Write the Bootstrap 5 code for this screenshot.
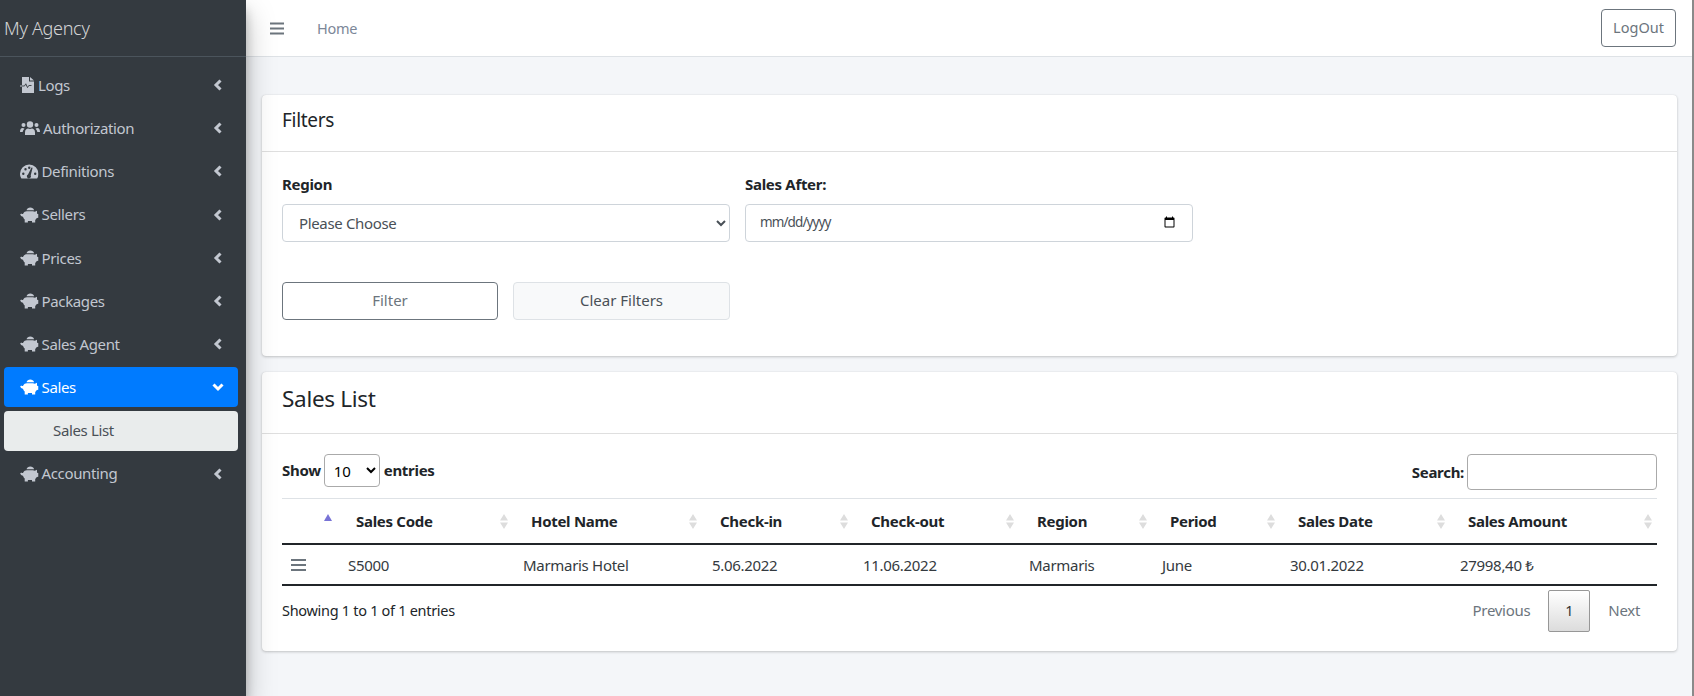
<!DOCTYPE html>
<html lang="en"><head><meta charset="utf-8">
<title>My Agency</title>
<link href="https://cdn.jsdelivr.net/npm/bootstrap@5.3.0/dist/css/bootstrap.min.css" rel="stylesheet">
<style>
html,body{height:100%;overflow:hidden}
body{font-family:"Noto Sans","Liberation Sans",sans-serif;font-size:14.5px;background:#f4f6f9;color:#212529;letter-spacing:-.3px}
.shell{height:696px}
.side{width:246px;flex:none;position:relative;z-index:5;background:#343a40;color:#c2c7d0;box-shadow:0 14px 28px rgba(0,0,0,.25),0 10px 10px rgba(0,0,0,.22)}
.brandline{height:57px;padding:0 4px;font-size:18px;font-weight:300;color:rgba(255,255,255,.8);border-bottom:1px solid #4b545c}
.menu{padding-top:8px}
.mitem{height:40px;margin:0 8px 3.2px 4px;padding:0 14px 0 16px;color:#c2c7d0;border-radius:4px;text-decoration:none;font-size:15px;letter-spacing:-.35px}
.mitem svg.ic{width:18.5px;height:16px;flex:none;fill:currentColor;margin-right:3px}
.mitem svg.ic.nar{width:14px;margin-right:4px}
.mitem svg.ic.wid{width:20px}
.mitem svg.ch{width:12px;height:12px;margin-left:auto;fill:none;stroke:currentColor;stroke-width:3}
.mitem.on{background:#007bff;color:#fff}
.mitem.sub{background:#e9ecec;color:#495057;padding-left:49px}
.pane{border-right:2px solid #8a8a8a;min-width:0}
.topbar{height:57px;background:#fff;border-bottom:1px solid #dee2e6;padding:0 16px 0 24px}
.topbar a{color:#7c8798;text-decoration:none;margin-left:33px;padding-top:2px}
.btn-out{width:75px;height:38px;border:1px solid #6c757d;border-radius:4px;background:#fff;color:#6c757d;font-size:14.5px;padding:0}
.bars{width:14px;height:15px;color:#6c757d}
.wrap{padding:38px 15px 0 16px}
.panel{background:#fff;border-radius:4px;box-shadow:0 0 1px rgba(0,0,0,.125),0 1px 3px rgba(0,0,0,.2)}
.panel-head{border-bottom:1px solid rgba(0,0,0,.125);padding:0 20px}
.p1{height:261px;margin-bottom:16px}
.p1 .panel-head{height:57px;font-size:19px;font-weight:400;padding-bottom:5px}
.p2{height:279px}
.p2 .panel-head{height:62px;font-size:22.5px;padding-bottom:8px}
.fbody{padding:21px 20px 20px}
.flab{font-weight:700;margin-bottom:8px;font-size:15px;display:block}
.fld{width:448px}
.twin{gap:15px}
.fctl{height:38px;width:100%;background-color:#fff;border:1px solid #ced4da;border-radius:4px;font-size:15px;color:#495057;padding:0 12px;letter-spacing:-.35px;font-family:inherit}
input.fctl{font-size:13.5px;letter-spacing:-.9px;padding:0 14px}
.act{margin-top:40px}
.act button{width:216px;height:38px;border-radius:4px;font-size:15px;padding:0}
.act button.bc{width:217px}
.bf{background:#fff;border:1px solid #6c757d;color:#6c757d}
.bc{background:#f8f9fa;border:1px solid #dee2e6;color:#495057}
.ctl{padding:20px 20px 0 20px;height:64px}
.ctl label{font-weight:700;font-size:15px}
.tselect{width:56px;height:33px;border:1px solid #aaa;border-radius:4px;background:#fff;margin:0 4px 0 3px;font-size:15px;padding:0 5px;font-family:inherit}
.tsearch{width:190px;height:36px;border:1px solid #aaa;border-radius:4px;margin-left:3px}
.tb{margin:0 20px;width:1375px;border-collapse:collapse;table-layout:fixed}
.tb col:nth-child(1){width:64px}
.tb col:nth-child(2){width:175px}
.tb col:nth-child(3){width:189px}
.tb col:nth-child(4){width:151px}
.tb col:nth-child(5){width:166px}
.tb col:nth-child(6){width:133px}
.tb col:nth-child(7){width:128px}
.tb col:nth-child(8){width:170px}
.tb thead tr{border-top:1px solid #dee2e6;border-bottom:2px solid #212529;height:45px}
.tb th{font-weight:700;position:relative;font-size:15px;padding-left:10px}
.tb td{font-size:15px;padding:3px 0 0 2px;height:41px;color:#343a40}
.tb td:first-child{padding:0 0 0 9px}
.tb tbody tr{border-bottom:2px solid #212529}
.sorter{position:absolute;right:13px;top:15px;width:8px;height:15px;color:#ddd}
.tb th:last-child .sorter{right:5px}
.sorter.asc{left:42px;right:auto;top:15px;height:7px;color:#7873d6}
.foot{padding:0 20px;margin-top:4px}
.pgbtn{color:#6c757d;font-size:15px;padding:0 17px}
.pgcur{width:42px;height:42px;border:1px solid #979797;border-radius:2px;background:linear-gradient(#fff,#dcdcdc);color:#333;display:flex;align-items:center;justify-content:center;margin:0 1px}
</style></head><body>
<svg width="0" height="0" class="d-block"><defs>
<symbol id="pig" viewBox="0 0 18.500 16" preserveAspectRatio="none">
<path d="M6.500 3.200C7 1.500 8.500.6 10.300.6s3.300.9 3.800 2.600z"/>
<path d="M3.300 6.500C4 5 5.300 4.200 6.800 4.200h6c.8 0 1.500.2 2.100.6L17 3.700v3l1.500.4v3.600l-1.700.4c-.4.800-1 1.400-1.600 1.900V15.500h-3.200V14H7.900v1.500H4.700v-3.100c-.9-.7-1.500-1.600-1.700-2.700C1.600 9.400.6 8.500.2 7.200l1.200-.8c.4.600 1 1 1.900.1z"/></symbol>
<symbol id="log" viewBox="0 0 14 16" preserveAspectRatio="none">
<path d="M2 0h7v4.500h5V16H2V9.500H0v-1h2zM10 0l4 3.500h-4z"/>
<path d="M2 9h2.500l1.300-2.200 1.700 3.800 1.300-2.100h2.700" fill="none" stroke="#343a40" stroke-width=".9"/></symbol>
<symbol id="usr" viewBox="0 0 20 16" preserveAspectRatio="none"><circle cx="10" cy="4.500" r="3.200"/><circle cx="3.500" cy="5" r="2"/><circle cx="16.500" cy="5" r="2"/><path d="M5 15v-2.500c0-3 1.800-4 3-4 1.300.5 2.700.5 4 0 1.200 0 3 1 3 4V15zM0 12c0-2.600 1-4 2.500-4 .7 0 1.500.2 2 .7-1 .8-1.600 2-1.800 3.300zM20 12c0-2.600-1-4-2.500-4-.7 0-1.500.2-2 .7 1 .8 1.600 2 1.800 3.300z"/></symbol>
<symbol id="gau" viewBox="0 0 18.500 16" preserveAspectRatio="none"><path fill-rule="evenodd" d="M9.250 1.500a9.250 9.250 0 0 1 9.250 9.250c0 1.800-.5 3.300-1.400 4.750H1.400C.5 14 0 12.500 0 10.750A9.250 9.250 0 0 1 9.250 1.500zM11.500 4.500L8 11.500a2 2 0 1 0 2.700.9l1.900-7.600zM3.300 9.500a1.200 1.200 0 1 0 0 2.400 1.200 1.200 0 0 0 0-2.400zM5.500 5a1.200 1.200 0 1 0 0 2.400 1.200 1.200 0 0 0 0-2.400zM9.250 3.500a1.200 1.200 0 1 0 0 2.400 1.200 1.200 0 0 0 0-2.400zM15.200 9.500a1.200 1.200 0 1 0 0 2.400 1.200 1.200 0 0 0 0-2.400z"/></symbol>
<symbol id="lft" viewBox="0 0 12 12"><path d="M8.500 1.500L4 6l4.500 4.500"/></symbol>
<symbol id="dwn" viewBox="0 0 12 12"><path d="M1.500 3.500L6 8l4.500-4.500"/></symbol>
<symbol id="sort" viewBox="0 0 8 15" preserveAspectRatio="none"><path d="M4 0l4 6.500H0zM4 15L0 8.500h8z"/></symbol>
</defs></svg>
<div class="shell d-flex">
<aside class="side">
<div class="brandline d-flex align-items-center">My Agency</div>
<nav class="menu d-flex flex-column">
<a class="mitem d-flex align-items-center" href="#"><svg class="ic nar"><use href="#log"/></svg>Logs<svg class="ch"><use href="#lft"/></svg></a>
<a class="mitem d-flex align-items-center" href="#"><svg class="ic wid"><use href="#usr"/></svg>Authorization<svg class="ch"><use href="#lft"/></svg></a>
<a class="mitem d-flex align-items-center" href="#"><svg class="ic"><use href="#gau"/></svg>Definitions<svg class="ch"><use href="#lft"/></svg></a>
<a class="mitem d-flex align-items-center" href="#"><svg class="ic"><use href="#pig"/></svg>Sellers<svg class="ch"><use href="#lft"/></svg></a>
<a class="mitem d-flex align-items-center" href="#"><svg class="ic"><use href="#pig"/></svg>Prices<svg class="ch"><use href="#lft"/></svg></a>
<a class="mitem d-flex align-items-center" href="#"><svg class="ic"><use href="#pig"/></svg>Packages<svg class="ch"><use href="#lft"/></svg></a>
<a class="mitem d-flex align-items-center" href="#"><svg class="ic"><use href="#pig"/></svg>Sales Agent<svg class="ch"><use href="#lft"/></svg></a>
<a class="mitem on d-flex align-items-center" href="#"><svg class="ic"><use href="#pig"/></svg>Sales<svg class="ch"><use href="#dwn"/></svg></a>
<a class="mitem sub d-flex align-items-center" href="#">Sales List</a>
<a class="mitem d-flex align-items-center" href="#"><svg class="ic"><use href="#pig"/></svg>Accounting<svg class="ch"><use href="#lft"/></svg></a>
</nav>
</aside>
<main class="pane flex-grow-1">
<header class="topbar d-flex align-items-center">
<svg class="bars" viewBox="0 0 15 15" preserveAspectRatio="none" fill="currentColor"><rect y="1.500" width="15" height="2"/><rect y="6.500" width="15" height="2"/><rect y="11.500" width="15" height="2"/></svg>
<a href="#">Home</a>
<button class="btn-out ms-auto">LogOut</button>
</header>
<div class="wrap">
<section class="panel p1">
<div class="panel-head d-flex align-items-center">Filters</div>
<div class="fbody">
<div class="twin d-flex">
<div class="fld"><label class="flab">Region</label><select class="fctl"><option>Please Choose</option></select></div>
<div class="fld"><label class="flab">Sales After:</label><input class="fctl" type="date"></div>
</div>
<div class="act twin d-flex"><button class="bf">Filter</button><button class="bc">Clear Filters</button></div>
</div>
</section>
<section class="panel p2">
<div class="panel-head d-flex align-items-center">Sales List</div>
<div class="ctl d-flex justify-content-between align-items-start">
<label class="d-flex align-items-center">Show<select class="tselect"><option>10</option></select>entries</label>
<label class="d-flex align-items-center">Search:<input class="tsearch"></label>
</div>
<table class="tb">
<colgroup><col><col><col><col><col><col><col><col><col></colgroup>
<thead><tr>
<th><svg class="sorter asc" fill="currentColor" viewBox="0 0 8 7"><path d="M4 0l4 7H0z"/></svg></th>
<th>Sales Code<svg class="sorter" fill="currentColor"><use href="#sort"/></svg></th>
<th>Hotel Name<svg class="sorter" fill="currentColor"><use href="#sort"/></svg></th>
<th>Check-in<svg class="sorter" fill="currentColor"><use href="#sort"/></svg></th>
<th>Check-out<svg class="sorter" fill="currentColor"><use href="#sort"/></svg></th>
<th>Region<svg class="sorter" fill="currentColor"><use href="#sort"/></svg></th>
<th>Period<svg class="sorter" fill="currentColor"><use href="#sort"/></svg></th>
<th>Sales Date<svg class="sorter" fill="currentColor"><use href="#sort"/></svg></th>
<th>Sales Amount<svg class="sorter" fill="currentColor"><use href="#sort"/></svg></th>
</tr></thead>
<tbody><tr>
<td class="text-secondary"><svg width="15" height="13" viewBox="0 0 15 13" fill="currentColor"><rect width="15" height="2"/><rect y="5" width="15" height="2"/><rect y="10" width="15" height="2"/></svg></td>
<td>S5000</td><td>Marmaris Hotel</td><td>5.06.2022</td><td>11.06.2022</td><td>Marmaris</td><td>June</td><td>30.01.2022</td><td>27998,40 ₺</td>
</tr></tbody></table>
<div class="foot d-flex justify-content-between align-items-center">
<span>Showing 1 to 1 of 1 entries</span>
<div class="d-flex align-items-center"><span class="pgbtn">Previous</span><span class="pgcur">1</span><span class="pgbtn">Next</span></div>
</div>
</section>
</div>
</main>
</div>
<script src="https://cdn.jsdelivr.net/npm/bootstrap@5.3.0/dist/js/bootstrap.bundle.min.js"></script>
</body></html>
